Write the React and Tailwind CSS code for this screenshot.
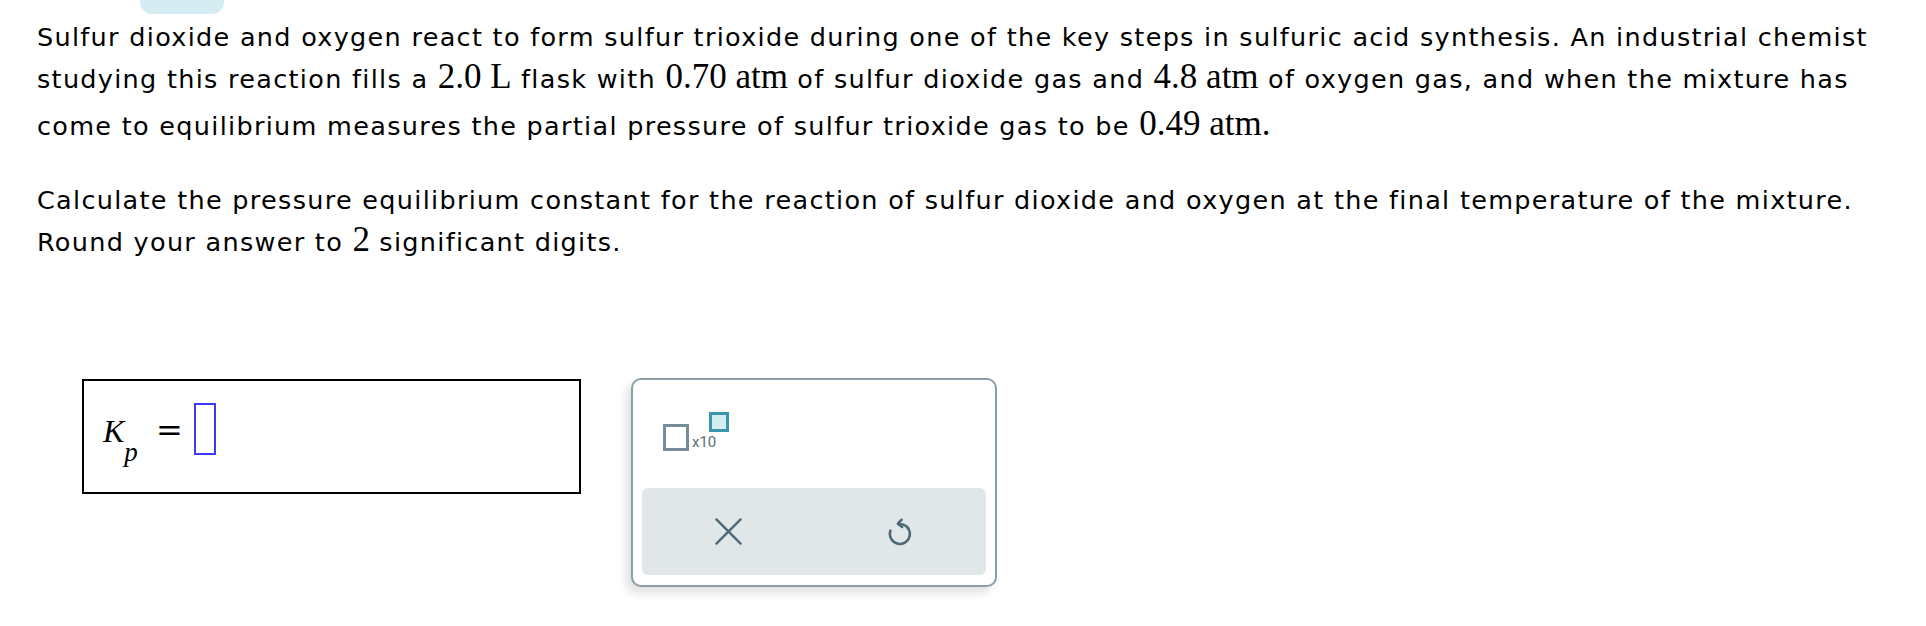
import React from 'react';

const M = ({ children }) => (
  <span className="font-['Liberation_Serif',serif] text-[35px] leading-none tracking-normal">{children}</span>
);

function UndoIcon() {
  return (
    <svg width="32" height="32" viewBox="0 0 24 24" fill="none" stroke="#4e6976" strokeWidth="1.9" strokeLinecap="round" strokeLinejoin="round">
      <path d="M11 6 A7.5 7.5 0 1 1 4.8 11" />
      <path d="M13.2 2.8 L10.4 5.8 L13.6 8.2" />
    </svg>
  );
}

function CloseIcon() {
  return (
    <svg width="29" height="29" viewBox="0 0 24 24" fill="none" stroke="#4e6976" strokeWidth="2" strokeLinecap="round">
      <path d="M2 2 L22 22 M22 2 L2 22" />
    </svg>
  );
}

export default function App() {
  return (
    <div className="min-h-screen bg-white text-black font-['DejaVu_Sans','Verdana',sans-serif]">
      <div className="ml-[140px] h-[14px] w-[84px] rounded-b-[12px] bg-[#d5ecf2]" />

      <div className="pl-[37px]">
        <p className="mt-[2px] text-[25.5px] leading-[42px] tracking-[1.3px]">
          <span className="block whitespace-nowrap">
            Sulfur dioxide and oxygen react to form sulfur trioxide during one of the key steps in sulfuric acid synthesis. An industrial chemist
          </span>
          <span className="block whitespace-nowrap">
            studying this reaction fills a <M>2.0 L</M> flask with <M>0.70 atm</M> of sulfur dioxide gas and <M>4.8 atm</M> of oxygen gas, and when the mixture has
          </span>
          <span className="mt-[5px] block whitespace-nowrap">
            come to equilibrium measures the partial pressure of sulfur trioxide gas to be <M>0.49 atm.</M>
          </span>
        </p>

        <p className="mt-[32px] text-[25.5px] leading-[42px] tracking-[1.3px]">
          <span className="block whitespace-nowrap">
            Calculate the pressure equilibrium constant for the reaction of sulfur dioxide and oxygen at the final temperature of the mixture.
          </span>
          <span className="block whitespace-nowrap">
            Round your answer to <M>2</M> significant digits.
          </span>
        </p>

        <div className="mt-[116px] ml-[45px] flex items-start gap-[50px]">
          <div className="h-[115px] w-[499px] border-2 border-black">
            <div className="flex items-start pl-[19px] pt-[22px]">
              <div className="mt-[12px] w-[53px] font-['Liberation_Serif',serif] text-[32px] italic leading-none">
                K<span className="text-[27px] align-[-19px]">p</span>
              </div>
              <div className="mt-[11px] font-['DejaVu_Serif',serif] text-[32px] leading-none">=</div>
              <div className="ml-[11px] h-[52px] w-[22px] border-2 border-[#3b3bf6]" />
            </div>
          </div>

          <div className="-mt-px flex h-[209px] w-[366px] flex-col rounded-[10px] border-2 border-[#8b9ea7] bg-white px-[9px] pb-[10px] shadow-[-5px_6px_10px_rgba(0,0,0,0.12)]">
            <div className="flex flex-1 items-start">
              <div className="ml-[21px] mt-[44px] h-[27px] w-[26px] border-[3px] border-[#768c96]" />
              <span className="ml-[3px] mt-[55px] font-['Roboto',sans-serif] text-[15px] leading-none text-[#566d78]">x10</span>
              <div className="-ml-[7px] mt-[32px] h-[20px] w-[20px] border-[3px] border-[#3b95ae] bg-[#d4edf3]" />
            </div>
            <div className="flex h-[87px] rounded-[6px] bg-[#e1e6e9]">
              <div className="flex flex-1 items-center justify-center">
                <CloseIcon />
              </div>
              <div className="flex flex-1 items-center justify-center">
                <UndoIcon />
              </div>
            </div>
          </div>
        </div>
      </div>
    </div>
  );
}
